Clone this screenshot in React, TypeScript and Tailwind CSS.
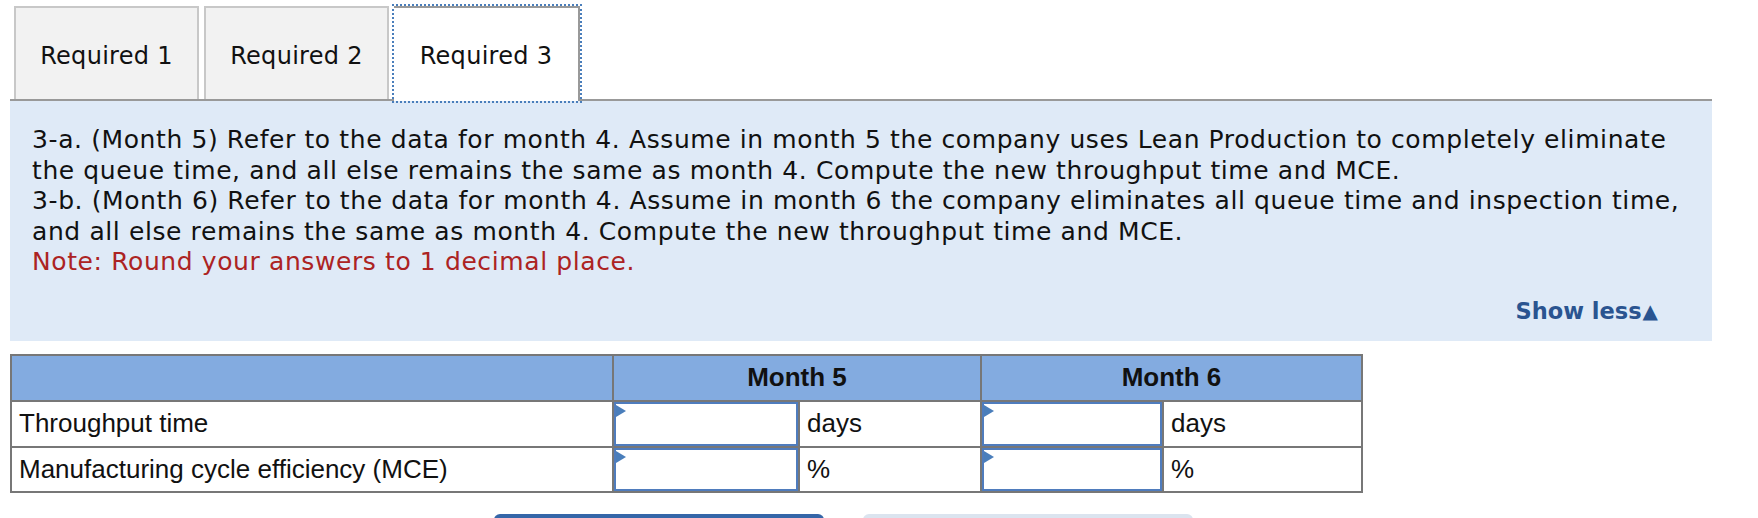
import React from "react";

const tabs = ["Required 1", "Required 2", "Required 3"];

function InputCell() {
  return (
    <div className="relative bg-white border-2 border-[#4f7cbd]">
      <svg className="absolute left-0 top-[1px]" width="10" height="12" viewBox="0 0 10 12">
        <polygon points="0,0 10,6 0,12" fill="#4a7ebb" />
      </svg>
    </div>
  );
}

export default function App() {
  return (
    <div className="w-[1758px] h-[518px] overflow-hidden bg-white text-black">
      <div className="ml-[10px] w-[1702px]">
        {/* tab strip */}
        <div className="flex gap-[5px] pl-[4px] pt-[6px] border-b-2 border-[#999]" style={{ fontFamily: '"DejaVu Sans", Verdana, sans-serif' }}>
          {tabs.map((t, i) =>
            i === 2 ? (
              <div
                key={t}
                className="relative z-10 -mb-[2px] flex h-[95px] w-[186px] items-center justify-center border-t-2 border-r-2 border-[#999] bg-white pb-[2px] pt-[4px] text-[24px] tracking-[0.3px] text-[#111] outline-2 outline-dotted outline-[#4a7ebb]"
              >
                {t}
              </div>
            ) : (
              <div
                key={t}
                className="flex h-[93px] w-[185px] items-center justify-center border-2 border-b-0 border-[#c8c8c8] bg-[#f2f2f2] pt-[4px] text-[24px] tracking-[0.3px] text-[#111]"
              >
                {t}
              </div>
            )
          )}
        </div>

        {/* question panel */}
        <div
          className="bg-[#dfeaf7] pt-[24px] pb-[17px] pl-[22px] pr-[14px] text-[25px] leading-[30.6px] tracking-[0.6px] text-[#111]"
          style={{ fontFamily: '"DejaVu Sans", Verdana, sans-serif' }}
        >
          <p>
            3-a. (Month 5) Refer to the data for month 4. Assume in month 5 the company uses Lean Production to completely eliminate the queue time, and all else remains the same as month 4. Compute the new throughput time and MCE.
            <br />
            3-b. (Month 6) Refer to the data for month 4. Assume in month 6 the company eliminates all queue time and inspection time, and all else remains the same as month 4. Compute the new throughput time and MCE.
          </p>
          <p className="text-[#ac2323]">Note: Round your answers to 1 decimal place.</p>
          <div className="mt-[20px] flex h-[26px] items-center justify-end pr-[40px] text-[22.5px] font-bold tracking-normal text-[#2a5490]">
            <span>Show less</span>
            <span className="ml-[1px] text-[20px]">▲</span>
          </div>
        </div>

        {/* answer table */}
        <div
          className="mt-[13px] grid w-[1353px] grid-cols-[600px_184px_180px_180px_197px] grid-rows-[44px_44px_43px] gap-[2px] bg-[#777] p-[2px] text-[26px] text-[#111]"
          style={{ fontFamily: '"Liberation Sans", Arial, sans-serif' }}
        >
          <div className="bg-[#83abe0]" />
          <div className="col-span-2 flex items-center justify-center bg-[#83abe0] font-bold">Month 5</div>
          <div className="col-span-2 flex items-center justify-center bg-[#83abe0] font-bold">Month 6</div>

          <div className="flex items-center bg-white pl-[7px]">Throughput time</div>
          <InputCell />
          <div className="flex items-center bg-white pl-[7px]">days</div>
          <InputCell />
          <div className="flex items-center bg-white pl-[7px]">days</div>

          <div className="flex items-center bg-white pl-[7px]">Manufacturing cycle efficiency (MCE)</div>
          <InputCell />
          <div className="flex items-center bg-white pl-[7px]">%</div>
          <InputCell />
          <div className="flex items-center bg-white pl-[7px]">%</div>
        </div>

        {/* buttons peeking at the bottom */}
        <div className="mt-[21px] flex gap-[39px] pl-[484px]">
          <div className="h-[30px] w-[330px] rounded-t-[6px] bg-[#3566a8]" />
          <div className="h-[30px] w-[330px] rounded-t-[6px] bg-[#dbe4ef]" />
        </div>
      </div>
    </div>
  );
}
